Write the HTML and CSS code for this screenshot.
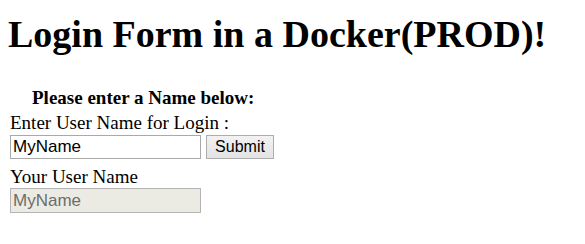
FILE: index.html
```html
<!DOCTYPE html>
<html>
<head>
<meta charset="utf-8">
<link rel="stylesheet" href="styles.css">
</head>
<body>
<h1 class="title">Login Form in a Docker(PROD)!</h1>
<form class="form">
  <div class="prompt">Please enter a Name below:</div>
  <label class="label" for="name">Enter User Name for Login :</label>
  <div class="row">
    <input class="field" id="name" type="text" value="MyName">
    <button class="btn" type="button">Submit</button>
  </div>
  <label class="label label2" for="out">Your User Name</label>
  <input class="field out" id="out" type="text" value="MyName" disabled>
</form>
</body>
</html>
```
FILE: styles.css
```css
html, body { margin: 0; padding: 0; background: #fff; }
body { padding: 10px 10px; font-family: "Liberation Serif", "Times New Roman", serif; color: #000; }
.title { margin: 0 0 0 -2px; font-size: 38px; line-height: 48px; font-weight: bold; }
.form { margin-top: 29px; }
.prompt { font-weight: bold; font-size: 19px; line-height: 22px; margin-left: 22px; }
.label { display: block; font-size: 19px; line-height: 22px; margin-top: 3px; }
.row { display: flex; gap: 5px; align-items: center; margin-top: 1px; }
.field { box-sizing: border-box; width: 191px; height: 24px; margin: 0; padding: 0 2px; border: 1px solid #a9a9a9; font-family: "Liberation Sans", Arial, sans-serif; font-size: 17px; color: #000; background: #fff; }
.btn { box-sizing: border-box; width: 68px; height: 24px; margin: 0; padding: 0; border: 1px solid #adadad; border-radius: 0; background: linear-gradient(#f2f2f2, #e3e3e3); font-family: "Liberation Sans", Arial, sans-serif; font-size: 16px; color: #000; }
.label2 { margin-top: 7px; }
.out { display: block; margin-top: 0; height: 25px; background: #ebebe4; color: #6d6d6d; border: 1px solid #b4b4b4; }
```
